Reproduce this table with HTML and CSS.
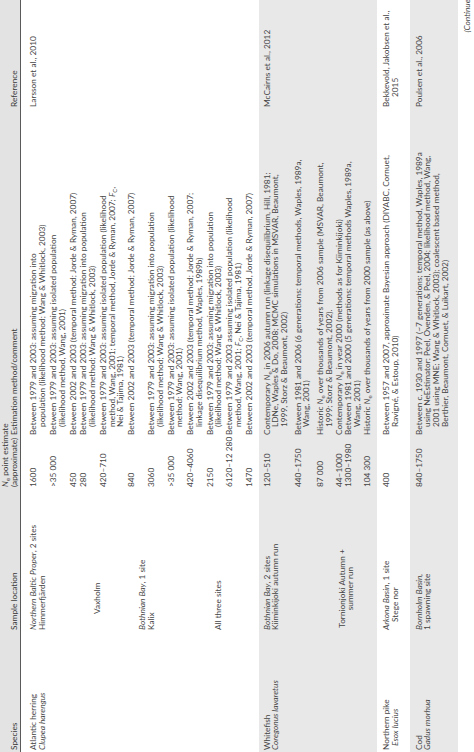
FILE: index.html
```html
<!DOCTYPE html>
<html>
<head>
<meta charset="utf-8">
<link rel="stylesheet" href="styles.css">
</head>
<body>
<div class="page">
  <div class="sheet">
    <table class="tbl">
      <colgroup>
        <col class="c-sp"><col class="c-loc"><col class="c-ne"><col class="c-me"><col class="c-ref">
      </colgroup>
      <thead>
        <tr>
          <th class="h-sp">Species</th>
          <th class="h-loc">Sample location</th>
          <th class="h-ne"><i>N</i><sub>e</sub> point estimate<br>(approximate)</th>
          <th class="h-me">Estimation method/comment</th>
          <th class="h-ref">Reference</th>
        </tr>
      </thead>
      <tbody class="white">
        <tr class="first">
          <td rowspan="12" class="sp">Atlantic herring<br><i>Clupea harengus</i></td>
          <td rowspan="3" class="loc"><i>Northern Baltic Proper</i>, 2 sites<br>Himmerfjärden</td>
          <td class="ne">1600</td>
          <td class="me">Between 1979 and 2003: assuming migration into<br>population (likelihood method; Wang &amp; Whitlock, 2003)</td>
          <td rowspan="12" class="ref">Larsson et al., 2010</td>
        </tr>
        <tr>
          <td class="ne">&gt;35 000</td>
          <td class="me">Between 1979 and 2003: assuming isolated population<br>(likelihood method, Wang, 2001)</td>
        </tr>
        <tr>
          <td class="ne">450</td>
          <td class="me">Between 2002 and 2003 (temporal method; Jorde &amp; Ryman, 2007)</td>
        </tr>
        <tr>
          <td rowspan="3" class="loc vax"><span class="site2">Vaxholm</span></td>
          <td class="ne">280</td>
          <td class="me">Between 1979 and 2003: assuming migration into population<br>(likelihood method; Wang &amp; Whitlock, 2003)</td>
        </tr>
        <tr>
          <td class="ne">420–710</td>
          <td class="me">Between 1979 and 2003: assuming isolated population (likelihood<br>method, Wang, 2001; temporal method, Jorde &amp; Ryman, 2007; <i>F</i><sub>C</sub>,<br>Nei &amp; Tajima, 1981)</td>
        </tr>
        <tr>
          <td class="ne">840</td>
          <td class="me">Between 2002 and 2003 (temporal method; Jorde &amp; Ryman, 2007)</td>
        </tr>
        <tr class="gap">
          <td rowspan="3" class="loc up"><i>Bothnian Bay</i>, 1 site<br>Kalix</td>
          <td class="ne">3060</td>
          <td class="me">Between 1979 and 2003: assuming migration into population<br>(likelihood method; Wang &amp; Whitlock, 2003)</td>
        </tr>
        <tr>
          <td class="ne">&gt;35 000</td>
          <td class="me">Between 1979 and 2003: assuming isolated population (likelihood<br>method; Wang, 2001)</td>
        </tr>
        <tr>
          <td class="ne">420–4060</td>
          <td class="me">Between 2002 and 2003 (temporal method; Jorde &amp; Ryman, 2007;<br>linkage disequilibrium method, Waples, 1989b)</td>
        </tr>
        <tr>
          <td rowspan="3" class="loc three">All three sites</td>
          <td class="ne">2150</td>
          <td class="me">Between 1979 and 2003; assuming migration into population<br>(likelihood method; Wang &amp; Whitlock, 2003)</td>
        </tr>
        <tr>
          <td class="ne">6120–12 280</td>
          <td class="me">Between 1979 and 2003 assuming isolated population (likelihood<br>method, Wang, 2001; <i>F</i><sub>C</sub>, Nei &amp; Tajima, 1981)</td>
        </tr>
        <tr class="last">
          <td class="ne">1470</td>
          <td class="me">Between 2002 and 2003 (temporal method, Jorde &amp; Ryman, 2007)</td>
        </tr>
      </tbody>
      <tbody class="gray wf">
        <tr class="first">
          <td rowspan="6" class="sp">Whitefish<br><i>Coregonus lavaretus</i></td>
          <td rowspan="3" class="loc"><i>Bothnian Bay</i>, 2 sites<br>Kiiminkijoki autumn run</td>
          <td class="ne">120–510</td>
          <td class="me">Contemporary <i>N</i><sub>e</sub> in 2006 autumn run (linkage disequilibrium, Hill, 1981;<br>LDNe, Waples &amp; Do, 2008; MCMC simulations in MSVAR, Beaumont,<br>1999, Storz &amp; Beaumont, 2002)</td>
          <td rowspan="6" class="ref">McCairns et al., 2012</td>
        </tr>
        <tr class="gap2">
          <td class="ne">440–1750</td>
          <td class="me">Between 1981 and 2006 (6 generations; temporal methods, Waples, 1989a,<br>Wang, 2001)</td>
        </tr>
        <tr class="gap2">
          <td class="ne">87 000</td>
          <td class="me">Historic <i>N</i><sub>e</sub> over thousands of years from 2006 sample (MSVAR, Beaumont,<br>1999; Storz &amp; Beaumont, 2002).</td>
        </tr>
        <tr class="tight">
          <td rowspan="3" class="loc torn">Tornionjoki Autumn +<br>summer run</td>
          <td class="ne">44–1000</td>
          <td class="me">Contemporary <i>N</i><sub>e</sub> in year 2000 (methods as for Kiiminkijoki)</td>
        </tr>
        <tr class="tight">
          <td class="ne">1300–1980</td>
          <td class="me">Between 1981 and 2000 (5 generations; temporal methods Waples, 1989a,<br>Wang, 2001)</td>
        </tr>
        <tr class="tight last">
          <td class="ne">104 300</td>
          <td class="me">Historic <i>N</i><sub>e</sub> over thousands of years from 2000 sample (as above)</td>
        </tr>
      </tbody>
      <tbody class="white">
        <tr class="first last">
          <td class="sp">Northern pike<br><span class="site1"><i>Esox lucius</i></span></td>
          <td class="loc"><i>Arkona Basin</i>, 1 site<br><span class="site">Stege nor</span></td>
          <td class="ne">400</td>
          <td class="me">Between 1957 and 2007, approximate Bayesian approach (DIYABC, Cornuet,<br>Ravigné, &amp; Estoup, 2010)</td>
          <td class="ref">Bekkevold, Jakobsen et al.,<br>2015</td>
        </tr>
      </tbody>
      <tbody class="gray cod">
        <tr class="first last">
          <td class="sp">Cod<br><i>Gadus morhua</i></td>
          <td class="loc"><i>Bornholm Basin,</i><br>1 spawning site</td>
          <td class="ne">840–1750</td>
          <td class="me">Between c. 1930 and 1997 (~7 generations; temporal method, Waples, 1989a<br>using NeEstimator; Peel, Ovenden, &amp; Peel, 2004; likelihood method, Wang,<br>2001 using MNE; Wang &amp; Whitlock, 2003); coalescent based method,<br>Berthier, Beaumont, Cornuet, &amp; Luikart, 2002)</td>
          <td class="ref">Poulsen et al., 2006</td>
        </tr>
      </tbody>
    </table>
    <div class="continues">(Continues)</div>
  </div>
</div>
</body>
</html>
```

FILE: styles.css
```css
* {
  box-sizing: border-box;
  margin: 0;
  padding: 0;
}

html, body {
  width: 474px;
  height: 752px;
  overflow: hidden;
  background: #ffffff;
}

body {
  font-family: Lato, "Open Sans", sans-serif;
  font-size: 8.3px;
  color: #444444;
}

.page {
  width: 474px;
  height: 752px;
  overflow: hidden;
}

.sheet {
  width: 776px;
  height: 474px;
  transform-origin: 0 0;
  transform: translateY(752px) rotate(-90deg);
}

.tbl {
  width: 776px;
  border-collapse: collapse;
  table-layout: fixed;
  line-height: 8.7px;
}

.c-sp { width: 120px; }
.c-loc { width: 143px; }
.c-ne { width: 52px; }
.c-me { width: 328px; }
.c-ref { width: 133px; }

.tbl th,
.tbl td {
  font-weight: normal;
  text-align: left;
  vertical-align: top;
  white-space: nowrap;
  padding: 2.2px 2px 0 2px;
}

.tbl th {
  background: #e3e3e3;
  color: #3a3a3a;
  vertical-align: bottom;
  padding: 1px 2px 2px 2px;
  border-bottom: 1px solid #5a5a5a;
}

.tbl sub {
  font-size: 6px;
  line-height: 0;
  vertical-align: -1.5px;
}

.gray td {
  background: #e8e8e8;
}

.first td {
  padding-top: 8px;
}

.last td {
  padding-bottom: 5px;
}

.wf .first td {
  padding-top: 4px;
}

.wf .last td {
  padding-bottom: 6px;
}

.gap td {
  padding-top: 10.9px;
}

.gap td.up {
  padding-top: 2.2px;
}

.gap2 td {
  padding-top: 5px;
}

.tight td {
  padding-top: 1px;
}

.white .first.last td {
  padding-top: 5px;
  padding-bottom: 10px;
}

.cod .first.last td {
  padding-top: 5px;
  padding-bottom: 8px;
}

.me {
  padding-left: 10px !important;
  text-indent: -8px;
}

.loc .site {
  padding-left: 8px;
}

.sp .site1 {
  padding-left: 4px;
}

.loc .site2 {
  padding-left: 16px;
}

.loc.vax {
  padding-top: 16px;
}

.loc.three {
  padding-top: 10px;
}

.loc.torn {
  text-align: center;
  padding-top: 4px;
  padding-right: 58px;
}

.ref,
.h-ref {
  padding-left: 12px !important;
  text-indent: -10px;
}

.continues {
  text-align: right;
  font-style: italic;
  padding: 5px 18px 0 0;
  line-height: 8.7px;
}
```
